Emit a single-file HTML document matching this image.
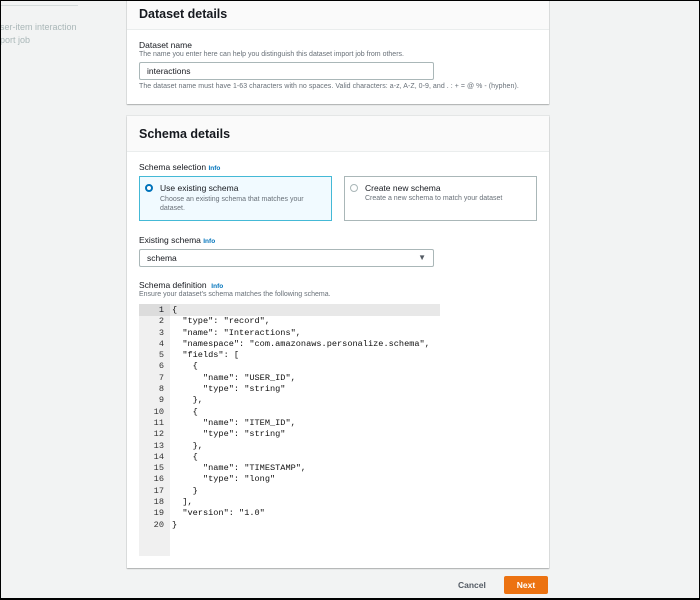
<!DOCTYPE html>
<html><head><style>
*{box-sizing:border-box;margin:0;padding:0}
body{width:700px;height:600px;overflow:hidden;background:#f2f3f3;font-family:"Liberation Sans",sans-serif;color:#16191f;position:relative}
.frame{position:absolute;left:0;top:0;width:700px;height:600px;border:1px solid #000;border-bottom-width:2px;z-index:10;pointer-events:none}
.a{position:absolute}
.card{position:absolute;left:127px;width:422px;background:#fff;box-shadow:0 1px 1px rgba(0,0,0,.25),0 0 0 1px #e4e6e6}
.hdr{background:#fafafa;border-bottom:1px solid #eaeded;font-weight:bold;font-size:12.5px;padding-left:12px}
.lbl{font-size:8.5px;color:#16191f}
.desc{font-size:7px;color:#687078}
.info{color:#0073bb;font-weight:bold;font-size:6.5px}
.inp{position:absolute;border:1px solid #aab7b8;border-radius:2px;background:#fff;font-size:8.5px;padding-left:7px}
.code{position:absolute;left:139px;top:304px;width:301px;height:252px;background:#fff;font-family:"Liberation Mono",monospace;font-size:8.6px;line-height:11.3px}
.gut{position:absolute;left:0;top:1px;width:31px;height:251px;background:#f0f0f0;text-align:right;padding-right:6px;color:#333}
.src{position:absolute;left:33px;top:1px;white-space:pre;color:#111}
</style></head><body>
<div class="frame"></div>
<div class="a" style="left:0;top:5px;width:78px;height:1px;background:#d5dbdb"></div>
<div class="a desc" style="left:0;top:21px;font-size:9px;color:#aab7b8;line-height:12.5px">ser-item interaction<br>port job</div>

<div class="card" style="top:-4px;height:108px">
 <div class="hdr" style="height:34px;line-height:32px;padding-top:2px">Dataset details</div>
</div>
<div class="a lbl" style="left:139px;top:40px">Dataset name</div>
<div class="a desc" style="left:139px;top:51px">The name you enter here can help you distinguish this dataset import job from others.</div>
<div class="inp" style="left:139px;top:62px;width:295px;height:18px;line-height:16px">interactions</div>
<div class="a desc" style="left:139px;top:83px;font-size:7px;letter-spacing:0.05px">The dataset name must have 1-63 characters with no spaces. Valid characters: a-z, A-Z, 0-9, and . : + = @ % - (hyphen).</div>

<div class="card" style="top:116px;height:452px">
 <div class="hdr" style="height:36px;line-height:36px">Schema details</div>
</div>
<div class="a lbl" style="left:139px;top:162px">Schema selection <span class="info">Info</span></div>
<div class="a" style="left:139px;top:176px;width:193px;height:45px;border:1px solid #44b9d6;background:#f1faff"></div>
<div class="a" style="left:145px;top:184px;width:8px;height:8px;border-radius:50%;background:#fff;border:2.5px solid #0073bb"></div>
<div class="a lbl" style="left:160px;top:183px">Use existing schema</div>
<div class="a desc" style="left:160px;top:195px;line-height:9px">Choose an existing schema that matches your<br>dataset.</div>
<div class="a" style="left:344px;top:176px;width:193px;height:45px;border:1px solid #aab7b8;background:#fff"></div>
<div class="a" style="left:350px;top:184px;width:8px;height:8px;border-radius:50%;border:1px solid #aab7b8"></div>
<div class="a lbl" style="left:365px;top:183px">Create new schema</div>
<div class="a desc" style="left:365px;top:195px">Create a new schema to match your dataset</div>

<div class="a lbl" style="left:139px;top:235px">Existing schema <span class="info">Info</span></div>
<div class="inp" style="left:139px;top:249px;width:295px;height:18px;line-height:16px">schema<span style="position:absolute;right:7px;top:0;font-size:8px;color:#545b64">▼</span></div>
<div class="a lbl" style="left:139px;top:280px">Schema definition &nbsp;<span class="info">Info</span></div>
<div class="a desc" style="left:139px;top:291px">Ensure your dataset's schema matches the following schema.</div>
<div class="code">
<div class="a" style="left:0;top:0;width:301px;height:12px;background:#e8e8e8"></div>
<div class="gut">1<br>2<br>3<br>4<br>5<br>6<br>7<br>8<br>9<br>10<br>11<br>12<br>13<br>14<br>15<br>16<br>17<br>18<br>19<br>20</div>
<div class="a" style="left:0;top:0;width:31px;height:12px;background:#dcdcdc;text-align:right;padding-right:6px;padding-top:1px">1</div>
<div class="src">{
  "type": "record",
  "name": "Interactions",
  "namespace": "com.amazonaws.personalize.schema",
  "fields": [
    {
      "name": "USER_ID",
      "type": "string"
    },
    {
      "name": "ITEM_ID",
      "type": "string"
    },
    {
      "name": "TIMESTAMP",
      "type": "long"
    }
  ],
  "version": "1.0"
}</div>
</div>

<div class="a" style="left:458px;top:580px;font-size:8.5px;font-weight:bold;color:#545b64">Cancel</div>
<div class="a" style="left:504px;top:576px;width:44px;height:18px;background:#ec7211;border-radius:2px;color:#fff;font-weight:bold;font-size:8.5px;text-align:center;line-height:18px">Next</div>
</body></html>
